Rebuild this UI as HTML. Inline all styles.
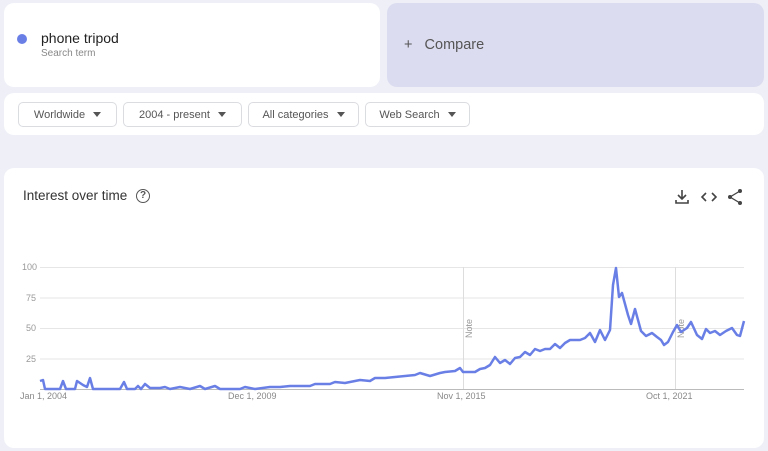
<!DOCTYPE html>
<html><head><meta charset="utf-8"><style>
*{margin:0;padding:0;box-sizing:border-box}
body{width:768px;height:451px;background:#eff0f7;font-family:"Liberation Sans",sans-serif;position:relative;overflow:hidden}
.card{position:absolute;background:#fff;border-radius:10px}
.chip{position:absolute;top:102px;height:25px;border:1px solid #dadce0;border-radius:5px;font-size:11px;color:#555;display:flex;align-items:center;justify-content:center;gap:8px}
.chip:after{content:"";border-left:4px solid transparent;border-right:4px solid transparent;border-top:5px solid #555}
.yl{position:absolute;left:22px;font-size:9px;color:#999;width:14px;text-align:right}
.xl{position:absolute;top:391px;font-size:9px;color:#888}
</style></head><body>
<div class="card" style="left:4px;top:3px;width:376px;height:84px"></div>
<div style="position:absolute;left:17px;top:34px;width:10px;height:10px;border-radius:50%;background:#6a7fe6"></div>
<div style="position:absolute;left:41px;top:30px;font-size:14px;color:#222">phone tripod</div>
<div style="position:absolute;left:41px;top:48px;font-size:10px;color:#888">Search term</div>
<div style="position:absolute;left:387px;top:3px;width:377px;height:84px;border-radius:10px;background:#dcdcf0"></div>
<div style="position:absolute;left:404px;top:37px;font-size:14.5px;color:#555">+&nbsp;&nbsp;&nbsp;Compare</div>
<div class="card" style="left:4px;top:93px;width:760px;height:42px"></div>
<div class="chip" style="left:18px;width:99px">Worldwide</div>
<div class="chip" style="left:123px;width:119px">2004 - present</div>
<div class="chip" style="left:248px;width:111px">All categories</div>
<div class="chip" style="left:365px;width:105px">Web Search</div>
<div class="card" style="left:4px;top:168px;width:760px;height:280px"></div>
<div style="position:absolute;left:23px;top:188px;font-size:13.5px;color:#333">Interest over time</div>
<div style="position:absolute;left:136px;top:189px;width:14px;height:14px;border:1.5px solid #555;border-radius:50%;font-size:10px;color:#555;text-align:center;line-height:11px;font-weight:bold">?</div>
<svg style="position:absolute;left:670px;top:186px" width="80" height="22" viewBox="0 0 80 22">
<path d="M12 4v9M8 9l4 4 4-4M6 14v3h12v-3" stroke="#444" stroke-width="1.6" fill="none"/>
<path d="M36 7l-4 4 4 4M42 7l4 4-4 4" stroke="#444" stroke-width="1.6" fill="none"/>
<circle cx="70" cy="5" r="2" fill="#444"/><circle cx="60" cy="11" r="2" fill="#444"/><circle cx="70" cy="17" r="2" fill="#444"/>
<path d="M70 5L60 11L70 17" stroke="#444" stroke-width="1.3" fill="none"/>
</svg>
<svg style="position:absolute;left:0;top:0" width="768" height="451">
<g stroke="#e6e6e6" stroke-width="1"><line x1="40" y1="267.5" x2="744" y2="267.5"/><line x1="40" y1="298" x2="744" y2="298"/><line x1="40" y1="328.5" x2="744" y2="328.5"/><line x1="40" y1="359" x2="744" y2="359"/></g>
<line x1="463.5" y1="267" x2="463.5" y2="389" stroke="#ddd"/><line x1="675.5" y1="267" x2="675.5" y2="389" stroke="#ddd"/>
<line x1="40" y1="389.5" x2="744" y2="389.5" stroke="#bbb"/>
<text x="472" y="338" font-size="9" fill="#999" transform="rotate(-90 472 338)" font-family="Liberation Sans">Note</text>
<text x="684" y="338" font-size="9" fill="#999" transform="rotate(-90 684 338)" font-family="Liberation Sans">Note</text>
<polyline fill="none" stroke="#6a7fe6" stroke-width="2.5" stroke-linejoin="round" points="40,381 43,380 45,389 60,389 63,381 66,389 75,389 77,381 83,385 87,387 90,378 93,389 120,389 124,382 127,389 135,389 138,386 141,389 145,384 150,388 160,388 165,387 170,389 180,387 190,389 200,386 205,389 215,386 220,389 240,389 245,387 255,389 270,387 280,387 290,386 300,386 310,386 315,384 330,384 335,382 345,383 350,382 360,380 370,381 375,378 385,378 395,377 405,376 415,375 420,373 430,376 440,373 445,372 455,371 460,368 463,372 475,372 480,369 485,368 490,365 495,357 500,363 505,360 510,364 515,358 520,357 525,352 530,355 535,349 540,351 545,349 550,349 555,344 560,348 565,343 570,340 580,340 585,338 590,333 595,342 600,330 605,340 610,330 613,285 616,268 619,297 622,293 628,315 631,324 635,309 641,331 646,336 652,333 657,337 661,340 664,345 668,342 673,332 677,325 681,332 687,328 691,322 697,335 702,339 706,329 710,333 715,331 720,335 726,331 732,328 737,335 740,336 744,321"/>
</svg>
<div class="yl" style="top:262px">100</div><div class="yl" style="top:293px">75</div><div class="yl" style="top:323px">50</div><div class="yl" style="top:354px">25</div>
<div class="xl" style="left:20px">Jan 1, 2004</div><div class="xl" style="left:228px">Dec 1, 2009</div><div class="xl" style="left:437px">Nov 1, 2015</div><div class="xl" style="left:646px">Oct 1, 2021</div>
</body></html>
